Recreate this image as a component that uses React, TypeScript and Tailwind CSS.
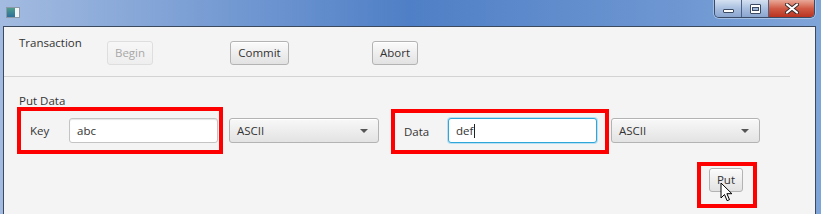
import React from 'react';

const font = { fontFamily: '"Open Sans", "Liberation Sans", sans-serif' };

function FxButton({ label, disabled, className = '' }: { label: string; disabled?: boolean; className?: string }) {
  return (
    <div
      className={`flex h-[24px] items-center justify-center rounded-[3px] border text-[11.5px] ${
        disabled
          ? 'border-[#dedede] bg-gradient-to-b from-[#f7f7f7] to-[#eeeeee] text-[#a8a8a8]'
          : 'border-[#b3b3b3] bg-gradient-to-b from-[#fbfbfb] to-[#e2e2e2] text-[#333333] shadow-[inset_0_1px_0_#ffffff]'
      } ${className}`}
    >
      {label}
    </div>
  );
}

function FxCombo({ className = '' }: { className?: string }) {
  return (
    <div
      className={`flex h-[25px] items-center justify-between rounded-[3px] border border-[#b3b3b3] bg-gradient-to-b from-[#f8f8f8] to-[#e3e3e3] pl-[7px] pr-[10px] text-[11.5px] text-[#333333] shadow-[inset_0_1px_0_#ffffff] ${className}`}
    >
      <span>ASCII</span>
      <svg width="8" height="4" viewBox="0 0 8 4">
        <path d="M0 0h8L4 4z" fill="#555555" />
      </svg>
    </div>
  );
}

function FxField({ value, focused, className = '' }: { value: string; focused?: boolean; className?: string }) {
  return (
    <div
      className={`flex h-[25px] items-center rounded-[3px] bg-white pl-[7px] text-[11.5px] text-[#333333] ${
        focused
          ? 'border border-[#2fa5d8] shadow-[0_0_0_1px_#b9e0f2]'
          : 'border border-[#c4c4c4] shadow-[inset_0_1px_1px_#e6e6e6]'
      } ${className}`}
    >
      <span>{value}</span>
      {focused && <span className="ml-[1px] h-[14px] w-[1px] bg-[#222222]" />}
    </div>
  );
}

function CaptionButtons() {
  return (
    <div className="flex h-[18px] overflow-hidden rounded-b-[5px] border border-t-0 border-[#3a4b68] shadow-[0_0_0_1px_rgba(255,255,255,0.35)]">
      <div className="flex w-[27px] items-center justify-center border-r border-[#4d6085] bg-gradient-to-b from-[#d5e1f1] via-[#a9bfdf] to-[#8aa5cf]">
        <div className="mt-[4px] h-[4px] w-[11px] rounded-[1px] border border-[#3b4a63] bg-white" />
      </div>
      <div className="flex w-[27px] items-center justify-center border-r border-[#4d6085] bg-gradient-to-b from-[#d5e1f1] via-[#a9bfdf] to-[#8aa5cf]">
        <div className="flex h-[10px] w-[11px] items-center justify-center rounded-[1px] border border-[#3b4a63] bg-white">
          <div className="h-[4px] w-[7px] border border-[#3b4a63] bg-[#9fb5d8]" />
        </div>
      </div>
      <div className="flex w-[45px] items-center justify-center bg-gradient-to-b from-[#e8a898] via-[#d05a45] to-[#b8321f]">
        <svg width="14" height="11" viewBox="0 0 14 11">
          <path d="M2 1.5l10 8M12 1.5l-10 8" stroke="#3a2a2a" strokeWidth="4" strokeLinecap="round" />
          <path d="M2 1.5l10 8M12 1.5l-10 8" stroke="#ffffff" strokeWidth="2.2" strokeLinecap="round" />
        </svg>
      </div>
    </div>
  );
}

export default function App() {
  return (
    <div
      className="flex h-[214px] w-[821px] flex-col overflow-hidden bg-gradient-to-r from-[#a3bbe0] via-[#4f7fc6] to-[#7fa4d8]"
      style={font}
    >
      {/* title bar */}
      <div className="flex h-[26px] shrink-0 items-start justify-between pl-[6px] pr-[6px]">
        <div className="mt-[7px] flex h-[11px] w-[14px] border border-[#8a98a8] bg-[#f2f4f6]">
          <div className="w-[8px] bg-gradient-to-b from-[#4e9c8c] to-[#2d6f9c]" />
        </div>
        <CaptionButtons />
      </div>

      <div className="flex flex-1 pl-[3px] pr-[5px]">
        <div className="relative flex-1 border-l border-t border-r border-[#3c4a60] bg-[#f4f4f4] text-[#333333]">
          {/* Transaction */}
          <div className="flex items-start pl-[15px] pt-[8px] text-[11.5px]">
            <div className="w-[88px] leading-[16px]">Transaction</div>
            <FxButton label="Begin" disabled className="mt-[6px] w-[46px]" />
            <FxButton label="Commit" className="ml-[77px] mt-[6px] w-[59px]" />
            <FxButton label="Abort" className="ml-[83px] mt-[6px] w-[46px]" />
          </div>

          <div className="mt-[11px] h-[1px] w-[786px] bg-[#d3d3d3]" />

          {/* Put Data */}
          <div className="mt-[17px] pl-[15px] text-[11.5px] leading-[13px]">Put Data</div>

          <div className="flex items-start text-[11.5px]">
            <div className="ml-[13px] flex h-[47px] w-[206px] items-center border-[4px] border-[#ff0000] pl-[9px]">
              <span className="w-[39px]">Key</span>
              <FxField value="abc" className="w-[149px]" />
            </div>
            <FxCombo className="ml-[6px] mt-[11px] w-[150px]" />
            <div className="ml-[12px] mt-[2px] flex h-[45px] w-[218px] items-start border-[4px] border-[#ff0000] pl-[9px] pt-[5px]">
              <span className="mt-[5px] w-[44px]">Data</span>
              <FxField value="def" focused className="w-[149px]" />
            </div>
            <FxCombo className="ml-[2px] mt-[11px] w-[149px]" />
          </div>

          <div className="mt-[8px] flex justify-end pr-[58px]">
            <div className="h-[46px] w-[60px] border-[4px] border-[#ff0000] pl-[8px] pt-[2px]">
              <FxButton label="Put" className="w-[34px]" />
            </div>
          </div>

          {/* mouse pointer */}
          <svg className="absolute left-[716px] top-[155px]" width="14" height="21" viewBox="0 0 14 21">
            <path
              d="M1 1v15l3.5-3.5 2.6 6.2 2.4-1-2.6-6h5z"
              fill="#ffffff"
              stroke="#000000"
              strokeWidth="1"
              strokeLinejoin="round"
            />
          </svg>
        </div>
      </div>
    </div>
  );
}
